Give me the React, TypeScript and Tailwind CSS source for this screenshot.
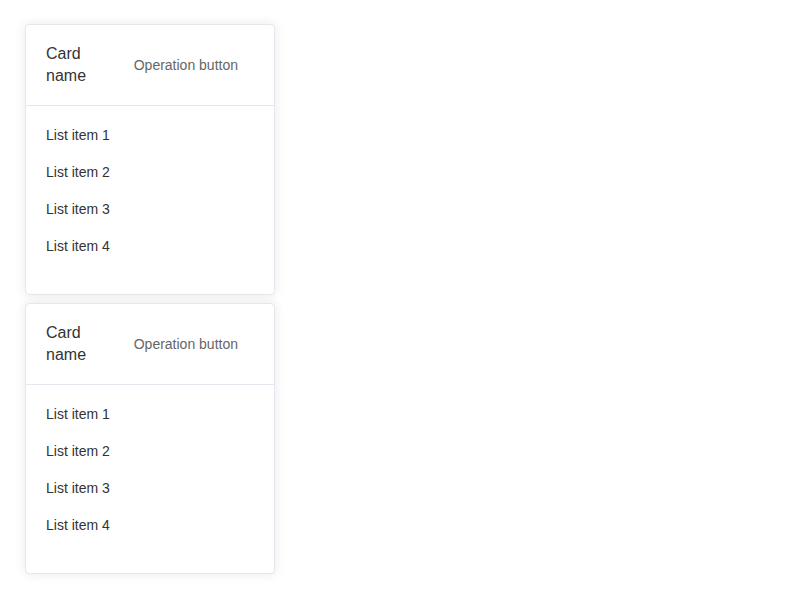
import React from 'react'

const items = ['List item 1', 'List item 2', 'List item 3', 'List item 4']

function Card() {
  return (
    <div className="w-[250px] rounded border border-[#e6e6ee] bg-white shadow-[0_0_12px_rgba(0,0,0,0.09)]">
      <div className="flex items-center border-b border-[#e6e6ee] px-5 py-[18px]">
        <div className="min-w-0 flex-1 text-base leading-[22px] text-[#333]">Card name</div>
        <div className="px-4 text-sm text-[#666]">Operation button</div>
      </div>
      <div className="pt-[11px] pb-[29px]">
        {items.map((item) => (
          <div key={item} className="px-5 text-sm leading-[37px] text-[#333]">
            {item}
          </div>
        ))}
      </div>
    </div>
  )
}

export default function App() {
  return (
    <div className="min-h-screen bg-white pl-[25px] pt-6 font-['Liberation_Sans',Arial,sans-serif]">
      <div className="flex flex-col gap-2">
        <Card />
        <Card />
      </div>
    </div>
  )
}
